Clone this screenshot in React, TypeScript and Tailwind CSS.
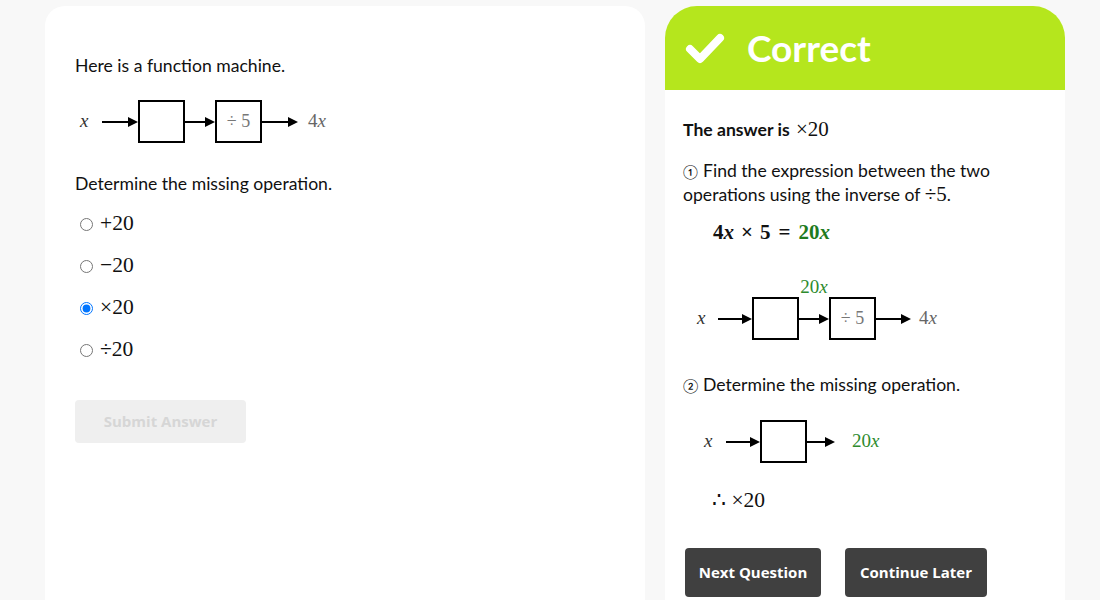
import React from "react";

const mathFont = { fontFamily: '"Liberation Serif", "Times New Roman", serif' };

function Arrow({ w }: { w: number }) {
  return (
    <svg width={w} height={12} viewBox={`0 0 ${w} 12`} className="block shrink-0">
      <line x1={0} y1={6} x2={w - 9} y2={6} stroke="#000" strokeWidth={2} />
      <polygon points={`${w - 10},1 ${w},6 ${w - 10},11`} fill="#000" />
    </svg>
  );
}

function Box({ children }: { children?: React.ReactNode }) {
  return (
    <div className="w-[47px] h-[43px] border-2 border-black flex items-center justify-center shrink-0 text-[18px] text-[#777]" style={mathFont}>
      {children}
    </div>
  );
}

function Var({ children, className = "" }: { children: React.ReactNode; className?: string }) {
  return (
    <span className={`text-[19px] ${className}`} style={mathFont}>
      {children}
    </span>
  );
}

function Check() {
  return (
    <svg width={40} height={32} viewBox="0 0 40 32" className="block shrink-0">
      <polyline points="5,17 15,27 35,6" fill="none" stroke="#fff" strokeWidth={8} strokeLinecap="round" strokeLinejoin="round" />
    </svg>
  );
}

export default function App() {
  return (
    <div className="w-[1100px] h-[600px] overflow-hidden bg-[#f8f8f8] flex gap-[20px] pl-[45px] pt-[6px]" style={{ fontFamily: 'Lato, "Noto Sans", sans-serif' }}>
      {/* Left card */}
      <div className="w-[600px] h-[640px] bg-white rounded-[20px] pl-[30px] pt-[47px] text-[17.6px] text-[#111] shrink-0">
        <div className="leading-[26px]">Here is a function machine.</div>
        <div className="flex items-center h-[43px] mt-[21px]">
          <Var className="italic text-[#333] ml-[5px] w-[22px]">x</Var>
          <Arrow w={36} />
          <Box />
          <Arrow w={30} />
          <Box>÷ 5</Box>
          <Arrow w={36} />
          <Var className="text-[#666] ml-[10px]">4<i>x</i></Var>
        </div>
        <div className="leading-[26px] mt-[28px]">Determine the missing operation.</div>
        <div className="mt-[6px]">
          {["+20", "−20", "×20", "÷20"].map((o, i) => (
            <label key={o} className="flex items-center h-[42px]">
              <input type="radio" name="opt" defaultChecked={i === 2} className="w-[13px] h-[13px] m-0 ml-[5px] mr-[7px]" />
              <span className="text-[21.5px] leading-none text-[#111]" style={mathFont}>{o}</span>
            </label>
          ))}
        </div>
        <button className="mt-[29px] w-[171px] h-[43px] rounded-[4px] bg-[#efefef] text-[#d6d6d6] font-bold text-[15px]" style={{ fontFamily: '"Open Sans", sans-serif' }}>
          Submit Answer
        </button>
      </div>

      {/* Right card */}
      <div className="w-[400px] h-[640px] bg-white rounded-t-[32px] shrink-0 overflow-hidden">
        <div className="h-[84px] bg-[#b5e61d] flex items-center pl-[20px] text-white">
          <Check />
          <span className="ml-[22px] text-[37px] font-bold leading-none mb-[1px]">Correct</span>
        </div>
        <div className="pl-[18px] pt-[27px] text-[17.6px] text-[#111]">
          <div className="h-[26px] leading-[26px] font-bold">
            The answer is <span className="font-normal text-[21px] leading-none ml-[2px]" style={mathFont}>×20</span>
          </div>
          <div className="leading-[23px] mt-[16px]">
            <span className="text-[14px]">①</span> Find the expression between the two
            <br />
            operations using the inverse of <span className="text-[21px] leading-none" style={mathFont}>÷5</span>.
          </div>
          <div className="mt-[13px] ml-[30px] h-[26px] leading-[26px] font-bold text-[21px]" style={mathFont}>
            4<i>x</i>
            <span className="mx-[7px]">×</span>5<span className="mx-[8px]">=</span>
            <span className="text-[#1e7b1e]">20<i>x</i></span>
          </div>
          <div className="flex items-center h-[43px] mt-[52px]">
            <Var className="italic text-[#333] ml-[14px] w-[21px]">x</Var>
            <Arrow w={34} />
            <Box />
            <div className="relative">
              <Arrow w={30} />
              <span className="absolute left-1/2 -translate-x-1/2 bottom-[23px] text-[19px] text-[#2e8b2e] whitespace-nowrap" style={mathFont}>
                20<i>x</i>
              </span>
            </div>
            <Box>÷ 5</Box>
            <Arrow w={35} />
            <Var className="text-[#666] ml-[8px]">4<i>x</i></Var>
          </div>
          <div className="leading-[26px] mt-[32px]">
            <span className="text-[14px]">②</span> Determine the missing operation.
          </div>
          <div className="flex items-center h-[43px] mt-[21px]">
            <Var className="italic text-[#333] ml-[21px] w-[22px]">x</Var>
            <Arrow w={34} />
            <Box />
            <Arrow w={28} />
            <Var className="text-[#2e8b2e] ml-[17px]">20<i>x</i></Var>
          </div>
          <div className="mt-[24px] ml-[29px] h-[26px] leading-[26px] text-[21.5px]" style={mathFont}>
            ∴ ×20
          </div>
          <div className="flex gap-[24px] mt-[35px] ml-[2px]">
            <button className="w-[136px] h-[49px] rounded-[4px] bg-[#404040] text-white font-bold text-[15px]" style={{ fontFamily: '"Open Sans", sans-serif' }}>
              Next Question
            </button>
            <button className="w-[142px] h-[49px] rounded-[4px] bg-[#404040] text-white font-bold text-[15px]" style={{ fontFamily: '"Open Sans", sans-serif' }}>
              Continue Later
            </button>
          </div>
        </div>
      </div>
    </div>
  );
}
